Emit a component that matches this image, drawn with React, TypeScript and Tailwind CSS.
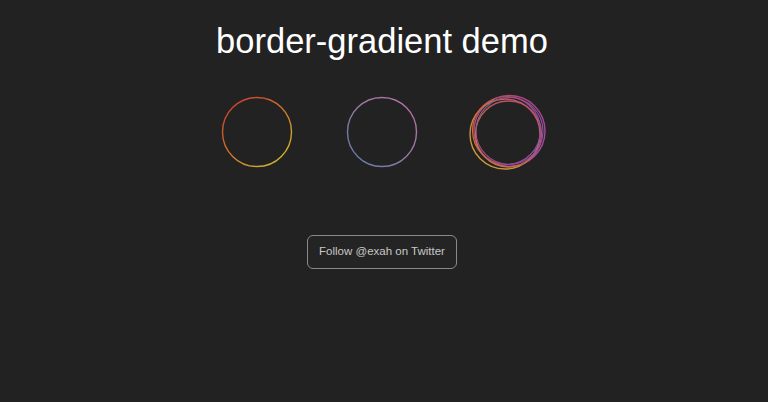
import React from 'react';

type Stop = [string, string];

// A ring whose stroke is a linear gradient
function Ring({ id, stops, r = 34.5, cx = 40, cy = 40, x1 = '0', y1 = '0', x2 = '1', y2 = '1', width = 1.4 }: {
    id: string; stops: Stop[]; r?: number; cx?: number; cy?: number;
    x1?: string; y1?: string; x2?: string; y2?: string; width?: number;
}) {
    return (
        <>
            <defs>
                <linearGradient id={id} x1={x1} y1={y1} x2={x2} y2={y2}>
                    {stops.map(([o, c]) => <stop key={o} offset={o} stopColor={c} />)}
                </linearGradient>
            </defs>
            <circle cx={cx} cy={cy} r={r} fill="none" stroke={`url(#${id})`} strokeWidth={width} />
        </>
    );
}

export default function App() {
    return (
        <div className="min-h-[402px] w-full bg-[#222222] font-['Liberation_Sans',Arial,sans-serif]">
            <div className="w-[764px] flex flex-col items-center">
                <h1 className="mt-[21px] text-[34.5px] leading-[40px] text-white">border-gradient demo</h1>

                <div className="mt-[31px] grid grid-cols-[125px_125px_125px] justify-items-center">
                    <svg width="80" height="80" viewBox="0 0 80 80">
                        <Ring id="warm" stops={[['0', '#c83a30'], ['0.5', '#d0742c'], ['1', '#cfc12c']]} x1="0.1" y1="0" x2="0.9" y2="1" />
                    </svg>
                    <svg width="80" height="80" viewBox="0 0 80 80">
                        <Ring id="cool" stops={[['0', '#5a7aa8'], ['0.5', '#9478a4'], ['1', '#bc6ca4']]} x1="0" y1="1" x2="1" y2="0" />
                    </svg>
                    <svg width="80" height="80" viewBox="0 0 80 80">
                        <Ring id="m1" cx={42.5} cy={39} r={35.5} stops={[['0', '#b8456a'], ['1', '#9a4cac']]} x1="0" y1="0" x2="1" y2="1" />
                        <Ring id="m2" cx={38} cy={42} r={35} stops={[['0', '#c8aa3a'], ['0.5', '#cc7a3c'], ['1', '#c04466']]} x1="0" y1="1" x2="1" y2="0" />
                        <Ring id="m3" cx={41.5} cy={42} r={33} stops={[['0', '#b84a78'], ['0.5', '#bc5a5a'], ['1', '#c8883c']]} x1="1" y1="0" x2="0" y2="1" />
                        <Ring id="m4" cx={39.5} cy={38.5} r={34} stops={[['0', '#cc6a3a'], ['0.5', '#ac4678'], ['1', '#7858b0']]} x1="0" y1="0" x2="1" y2="0" width={1.2} />
                        <Ring id="m5" cx={42.5} cy={39} r={33.5} stops={[['0', '#3f8aa4'], ['0.3', '#aa4a86'], ['1', '#944cac']]} x1="0" y1="0" x2="1" y2="1" width={1.1} />
                    </svg>
                </div>

                <button className="mt-[63px] h-[34px] w-[150px] rounded-[6px] border border-[#8a8a8a] bg-[#242424] text-[11.5px] text-[#c8c8c8]">
                    Follow @exah on Twitter
                </button>
            </div>
        </div>
    );
}
